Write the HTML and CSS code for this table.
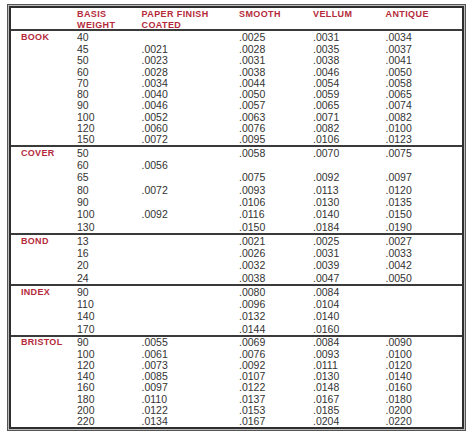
FILE: index.html
```html
<!DOCTYPE html>
<html lang="en">
<head>
<meta charset="utf-8">
<title>Paper thickness chart</title>
<link rel="stylesheet" href="styles.css">
</head>
<body>
<div class="frame">
  <div class="sheet">
    <div class="row head">
      <span></span>
      <span>BASIS<br>WEIGHT</span>
      <span>PAPER FINISH<br>COATED</span>
      <span>SMOOTH</span>
      <span>VELLUM</span>
      <span>ANTIQUE</span>
    </div>

    <div class="grp book">
      <div class="row"><span class="lbl">BOOK</span><span>40</span><span></span><span>.0025</span><span>.0031</span><span>.0034</span></div>
      <div class="row"><span></span><span>45</span><span>.0021</span><span>.0028</span><span>.0035</span><span>.0037</span></div>
      <div class="row"><span></span><span>50</span><span>.0023</span><span>.0031</span><span>.0038</span><span>.0041</span></div>
      <div class="row"><span></span><span>60</span><span>.0028</span><span>.0038</span><span>.0046</span><span>.0050</span></div>
      <div class="row"><span></span><span>70</span><span>.0034</span><span>.0044</span><span>.0054</span><span>.0058</span></div>
      <div class="row"><span></span><span>80</span><span>.0040</span><span>.0050</span><span>.0059</span><span>.0065</span></div>
      <div class="row"><span></span><span>90</span><span>.0046</span><span>.0057</span><span>.0065</span><span>.0074</span></div>
      <div class="row"><span></span><span>100</span><span>.0052</span><span>.0063</span><span>.0071</span><span>.0082</span></div>
      <div class="row"><span></span><span>120</span><span>.0060</span><span>.0076</span><span>.0082</span><span>.0100</span></div>
      <div class="row"><span></span><span>150</span><span>.0072</span><span>.0095</span><span>.0106</span><span>.0123</span></div>
    </div>

    <div class="grp cover">
      <div class="row"><span class="lbl">COVER</span><span>50</span><span></span><span>.0058</span><span>.0070</span><span>.0075</span></div>
      <div class="row"><span></span><span>60</span><span>.0056</span><span></span><span></span><span></span></div>
      <div class="row"><span></span><span>65</span><span></span><span>.0075</span><span>.0092</span><span>.0097</span></div>
      <div class="row"><span></span><span>80</span><span>.0072</span><span>.0093</span><span>.0113</span><span>.0120</span></div>
      <div class="row"><span></span><span>90</span><span></span><span>.0106</span><span>.0130</span><span>.0135</span></div>
      <div class="row"><span></span><span>100</span><span>.0092</span><span>.0116</span><span>.0140</span><span>.0150</span></div>
      <div class="row"><span></span><span>130</span><span></span><span>.0150</span><span>.0184</span><span>.0190</span></div>
    </div>

    <div class="grp bond">
      <div class="row"><span class="lbl">BOND</span><span>13</span><span></span><span>.0021</span><span>.0025</span><span>.0027</span></div>
      <div class="row"><span></span><span>16</span><span></span><span>.0026</span><span>.0031</span><span>.0033</span></div>
      <div class="row"><span></span><span>20</span><span></span><span>.0032</span><span>.0039</span><span>.0042</span></div>
      <div class="row"><span></span><span>24</span><span></span><span>.0038</span><span>.0047</span><span>.0050</span></div>
    </div>

    <div class="grp index">
      <div class="row"><span class="lbl">INDEX</span><span>90</span><span></span><span>.0080</span><span>.0084</span><span></span></div>
      <div class="row"><span></span><span>110</span><span></span><span>.0096</span><span>.0104</span><span></span></div>
      <div class="row"><span></span><span>140</span><span></span><span>.0132</span><span>.0140</span><span></span></div>
      <div class="row"><span></span><span>170</span><span></span><span>.0144</span><span>.0160</span><span></span></div>
    </div>

    <div class="grp bristol">
      <div class="row"><span class="lbl">BRISTOL</span><span>90</span><span>.0055</span><span>.0069</span><span>.0084</span><span>.0090</span></div>
      <div class="row"><span></span><span>100</span><span>.0061</span><span>.0076</span><span>.0093</span><span>.0100</span></div>
      <div class="row"><span></span><span>120</span><span>.0073</span><span>.0092</span><span>.0111</span><span>.0120</span></div>
      <div class="row"><span></span><span>140</span><span>.0085</span><span>.0107</span><span>.0130</span><span>.0140</span></div>
      <div class="row"><span></span><span>160</span><span>.0097</span><span>.0122</span><span>.0148</span><span>.0160</span></div>
      <div class="row"><span></span><span>180</span><span>.0110</span><span>.0137</span><span>.0167</span><span>.0180</span></div>
      <div class="row"><span></span><span>200</span><span>.0122</span><span>.0153</span><span>.0185</span><span>.0200</span></div>
      <div class="row"><span></span><span>220</span><span>.0134</span><span>.0167</span><span>.0204</span><span>.0220</span></div>
    </div>
  </div>
</div>
</body>
</html>
```

FILE: styles.css
```css
html, body {
  margin: 0;
  background: #ffffff;
}

body {
  padding: 4px 0 0 7px;
  font-family: "Liberation Sans Narrow", "Liberation Sans", Arial, sans-serif;
  font-size: 10.5px;
  color: #333333;
}

.frame {
  width: 459px;
  border: 1px solid #555555;
  background: #bdbdbd;
  padding: 1px;
  box-sizing: border-box;
}

.sheet {
  border: 2px solid #2e2e2e;
  background: #ffffff;
}

.row {
  display: grid;
  grid-template-columns: 66px 64.5px 97.5px 74px 72.5px 76.5px;
  align-items: center;
  line-height: 11px;
  white-space: nowrap;
}

.head {
  height: 21px;
  align-items: start;
  padding-top: 1px;
  box-sizing: border-box;
  font-family: "Liberation Sans", Arial, sans-serif;
  font-weight: bold;
  font-size: 9px;
  line-height: 10.5px;
  letter-spacing: 0.4px;
  color: #b52a3b;
}

.lbl {
  padding-left: 10px;
  font-family: "Liberation Sans", Arial, sans-serif;
  font-weight: bold;
  font-size: 9px;
  letter-spacing: 0.3px;
  color: #b52a3b;
}

.grp {
  border-top: 2px solid #3a3a3a;
}

.book .row { height: 11.25px; }
.book .row:first-child { height: 13px; }

.cover .row { height: 12.3px; }

.bond .row,
.index .row { height: 12.25px; }

.bristol .row { height: 11.25px; }
```
